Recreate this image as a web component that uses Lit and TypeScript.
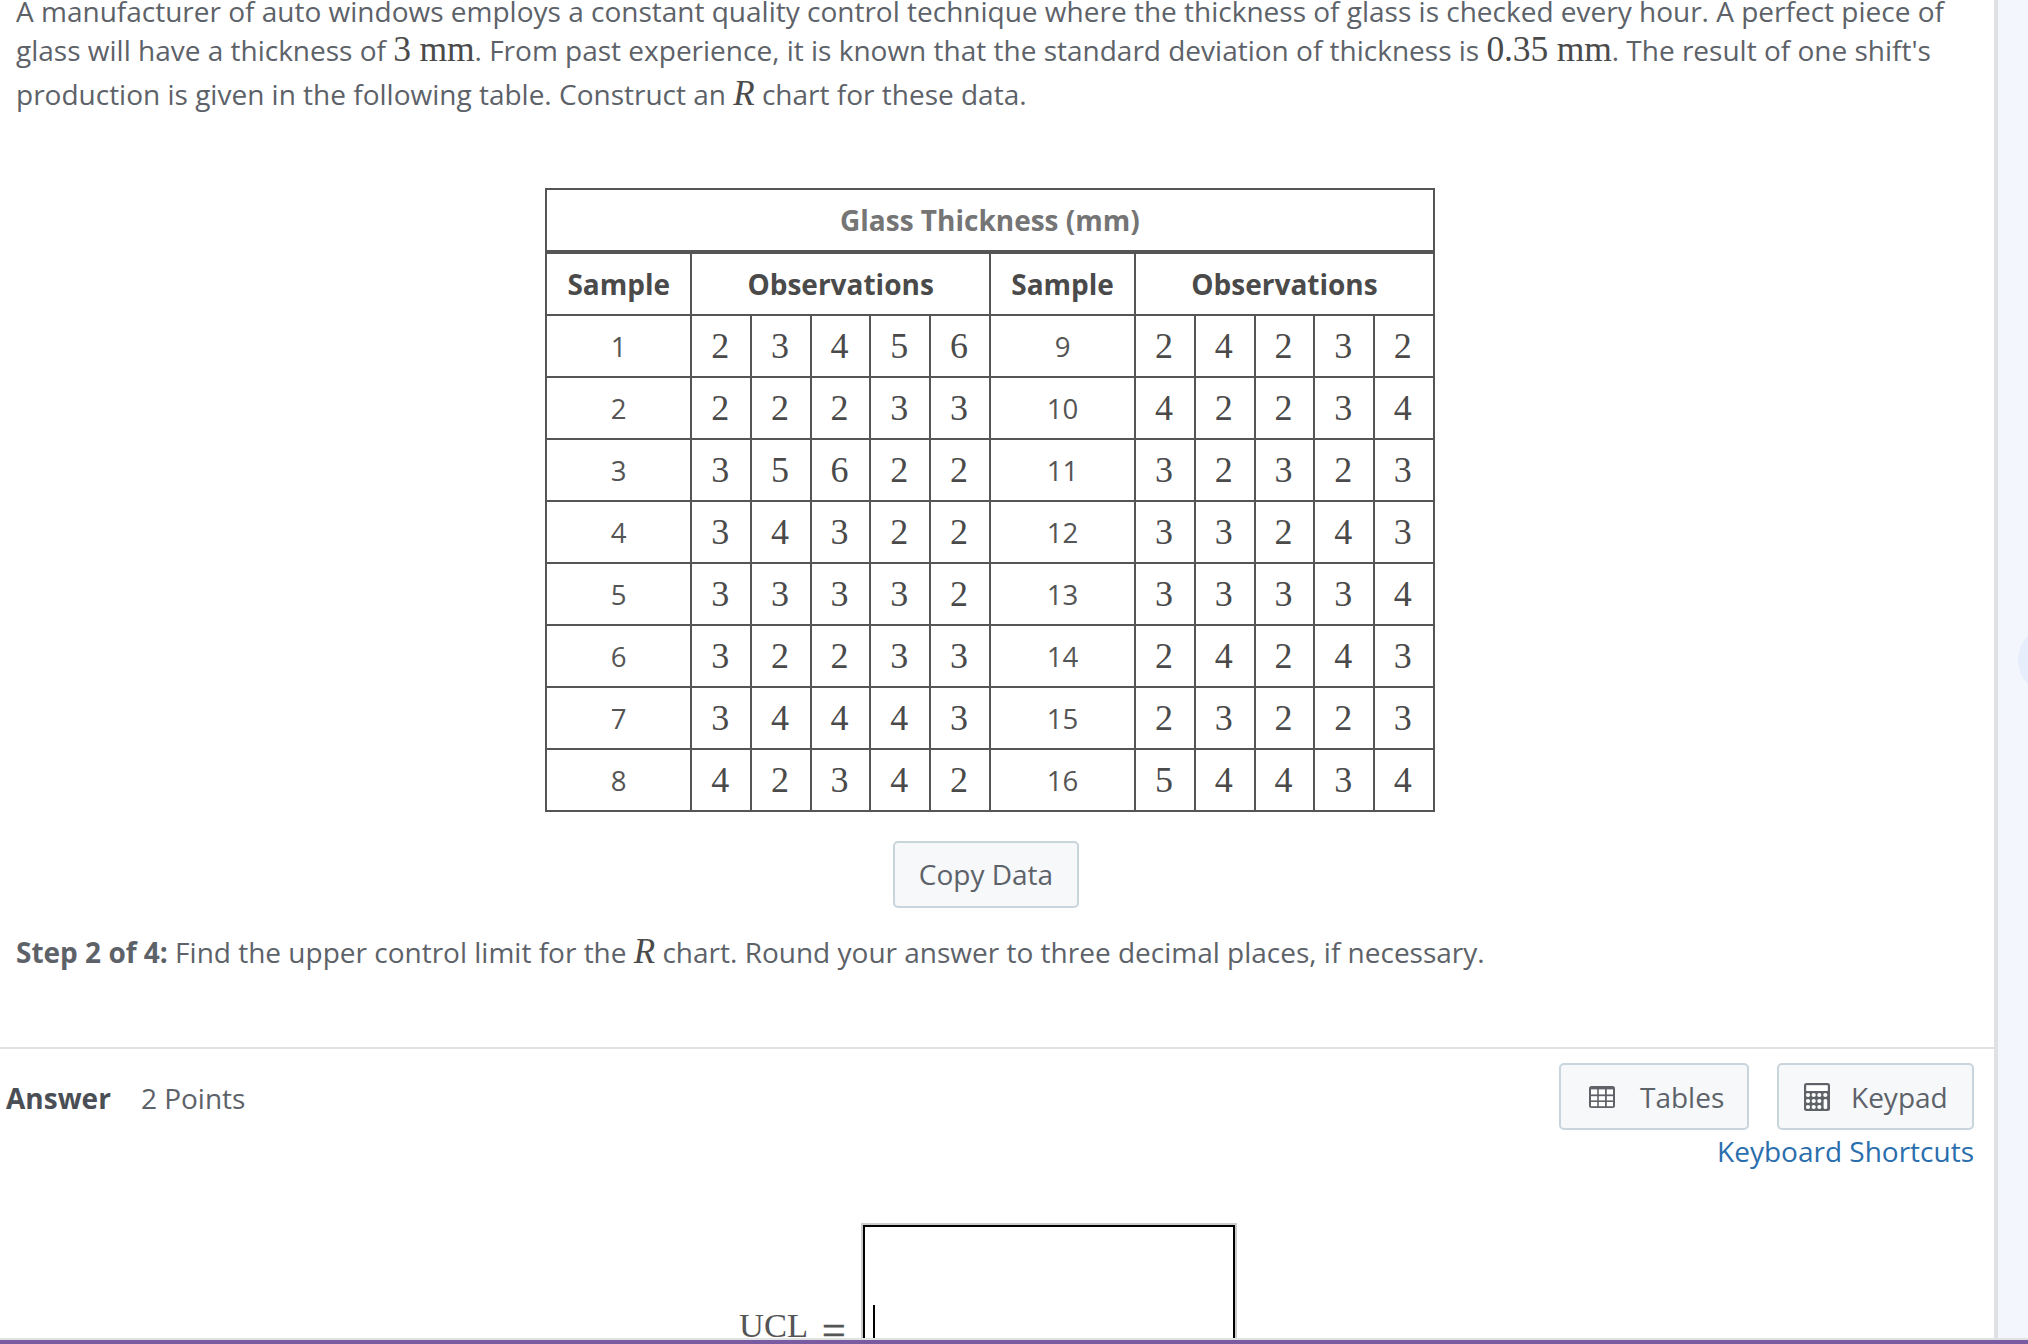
import { LitElement, html, css, svg } from "lit";
import { customElement } from "lit/decorators.js";

const ROWS: [number, number[], number, number[]][] = [
  [1, [2, 3, 4, 5, 6], 9, [2, 4, 2, 3, 2]],
  [2, [2, 2, 2, 3, 3], 10, [4, 2, 2, 3, 4]],
  [3, [3, 5, 6, 2, 2], 11, [3, 2, 3, 2, 3]],
  [4, [3, 4, 3, 2, 2], 12, [3, 3, 2, 4, 3]],
  [5, [3, 3, 3, 3, 2], 13, [3, 3, 3, 3, 4]],
  [6, [3, 2, 2, 3, 3], 14, [2, 4, 2, 4, 3]],
  [7, [3, 4, 4, 4, 3], 15, [2, 3, 2, 2, 3]],
  [8, [4, 2, 3, 4, 2], 16, [5, 4, 4, 3, 4]],
];

const tableIcon = () => {
  const xs = [2, 9.8, 17.8];
  const rows: [number, number][] = [[3.4, 5], [10.2, 4.2], [16, 4.2]];
  const cells = rows.flatMap(([y, h]) =>
    xs.map((x) => svg`<rect x=${x} y=${y} width="6.2" height=${h} fill="#fff"/>`));
  return html`<svg class="ico" width="26" height="22" viewBox="0 0 26 22"><rect width="26" height="22" rx="2.5" fill="#5f6368"/>${cells}</svg>`;
};

const calcIcon = () => {
  const keys = [];
  for (const y of [12, 18, 24]) for (const x of [4, 9.7, 15.3]) {
    keys.push(svg`<circle cx=${x} cy=${y} r="2.1" fill="#fff"/>`);
  }
  return html`<svg class="ico" width="26" height="28" viewBox="0 0 26 28"><rect width="26" height="28" rx="2.5" fill="#5f6368"/><rect x="2.2" y="2.2" width="21.6" height="5.8" fill="#fff"/>${keys}<circle cx="21.3" cy="12" r="2.1" fill="#fff"/><rect x="19.6" y="16" width="3.6" height="10" rx="1.6" fill="#fff"/></svg>`;
};

@customElement("app-root")
export class AppRoot extends LitElement {
  static styles = css`
    :host {
      display: flex;
      flex-direction: column;
      width: 2028px;
      height: 1344px;
      overflow: hidden;
      font-family: "Open Sans", "Noto Sans", sans-serif;
      color: #5d6269;
      background: #fff;
      position: relative;
    }
    .page { flex: 1; min-height: 0; display: flex; overflow: hidden; }
    .main {
      width: 1998px;
      flex: none;
      box-sizing: border-box;
      border-right: 4px solid #dfe1e3;
      background: #fff;
      overflow: hidden;
    }
    .aside { flex: 1; background: #f3f7fd; position: relative; overflow: hidden; }
    .blob {
      position: absolute;
      left: 20px;
      top: 625px;
      width: 70px;
      height: 70px;
      border-radius: 50%;
      background: #e6eefb;
    }
    .bar { flex: none; height: 6px; box-sizing: border-box; border-top: 2px solid #dfe1e3; background: #7a5aa0; }
    .intro {
      margin: -11px 0 0;
      padding: 0 16px;
      font-size: 28px;
      line-height: 44px;
      white-space: nowrap;
    }
    .l1 { display: block; height: 39px; }
    .m { font-family: "Liberation Serif", serif; font-size: 35.5px; color: #4a4a4a; line-height: 1; letter-spacing: -0.15px; }
    .mi { font-family: "Liberation Serif", serif; font-style: italic; font-size: 35px; color: #4a4a4a; line-height: 1; }
    table {
      border-collapse: collapse;
      table-layout: fixed;
      width: 889px;
      margin: 72px 0 0 545px;
      color: #4a4a4a;
    }
    td, th { border: 2px solid #555; padding: 0; text-align: center; height: 62px; box-sizing: border-box; }
    th { font-size: 28px; font-weight: 700; }
    .head { height: 63px; padding-bottom: 1px; }
    .title { color: #757575; border-bottom: 4px solid #555; height: 63px; }
    .s { font-size: 27.6px; font-weight: 400; color: #555; }
    .d { font-family: "Liberation Serif", serif; font-size: 36px; color: #4a4a4a; padding-right: 2px; }
    .cs { width: 145.4px; }
    .cd { width: 59.7px; }
    .copy-row { display: flex; justify-content: center; margin: 29px 0 0; padding-right: 22px; }
    .btn {
      box-sizing: border-box;
      height: 67px;
      border: 2px solid #c9d5dc;
      border-radius: 5px;
      background: #f6f8fa;
      display: inline-flex;
      align-items: center;
      font-size: 28px;
      color: #5d6269;
    }
    .copy { width: 186px; justify-content: center; padding-bottom: 1px; }
    .step { margin: 22px 0 0; padding: 0 16px; font-size: 28px; line-height: 44px; white-space: nowrap; }
    .step b { font-weight: 700; }
    .divider { height: 2px; background: #dfe1e3; margin-top: 73px; }
    .answer { display: flex; justify-content: space-between; padding: 14px 20px 0 6px; }
    .label { display: flex; gap: 30px; align-items: baseline; font-size: 28px; margin-top: 16px; }
    .label b { color: #4a4f55; font-weight: 700; }
    .tools { display: flex; flex-direction: column; align-items: flex-end; }
    .tool-row { display: flex; gap: 28px; }
    .tables { width: 190px; padding-left: 28px; gap: 25px; }
    .keypad { width: 197px; padding-left: 25px; gap: 21px; }
    .shortcuts { color: #2a6ead; font-size: 28px; line-height: 44px; margin-top: -1px; }
    .ico { flex: none; display: block; }
    .ucl { display: flex; align-items: flex-end; margin: 52px 0 0 739px; }
    .ucl-label { font-family: "Liberation Serif", serif; font-size: 34.5px; color: #555; line-height: 1; white-space: pre; margin-bottom: 3px; }
    .eq { display: inline-block; font-size: 42px; line-height: 34px; margin-left: 14px; transform: translateY(7px); -webkit-text-stroke: 0.6px #555; }
    .input {
      box-sizing: border-box;
      width: 372px;
      height: 120px;
      margin-left: 17px;
      border: 2px solid #000;
      outline: 2px solid #ccc;
      position: relative;
      background: #fff;
      flex: none;
    }
    .caret { position: absolute; left: 8px; top: 78px; width: 2px; height: 50px; background: #000; }
  `;

  render() {
    return html`
      <div class="page">
        <div class="main">
          <p class="intro"><span class="l1">A manufacturer of auto windows employs a constant quality control technique where the thickness of glass is checked every hour. A perfect piece of</span>glass will have a thickness of <span class="m">3 mm</span>. From past experience, it is known that the standard deviation of thickness is <span class="m">0.35 mm</span>. The result of one shift's<br />production is given in the following table. Construct an <span class="mi">R</span> chart for these data.</p>
          <table>
            <colgroup>
              <col class="cs" /><col class="cd" /><col class="cd" /><col class="cd" /><col class="cd" /><col class="cd" />
              <col class="cs" /><col class="cd" /><col class="cd" /><col class="cd" /><col class="cd" /><col class="cd" />
            </colgroup>
            <tr><th class="title" colspan="12">Glass Thickness (mm)</th></tr>
            <tr><th class="head">Sample</th><th class="head" colspan="5">Observations</th><th class="head">Sample</th><th class="head" colspan="5">Observations</th></tr>
            ${ROWS.map(([a, xs, b, ys]) => html`<tr>
              <td class="s">${a}</td>${xs.map((v) => html`<td class="d">${v}</td>`)}
              <td class="s">${b}</td>${ys.map((v) => html`<td class="d">${v}</td>`)}
            </tr>`)}
          </table>
          <div class="copy-row"><div class="btn copy">Copy Data</div></div>
          <p class="step"><b>Step 2 of 4:</b> Find the upper control limit for the <span class="mi">R</span> chart. Round your answer to three decimal places, if necessary.</p>
          <div class="divider"></div>
          <div class="answer">
            <div class="label"><b>Answer</b><span>2 Points</span></div>
            <div class="tools">
              <div class="tool-row">
                <div class="btn tables">${tableIcon()}<span>Tables</span></div>
                <div class="btn keypad">${calcIcon()}<span>Keypad</span></div>
              </div>
              <div class="shortcuts">Keyboard Shortcuts</div>
            </div>
          </div>
          <div class="ucl">
            <span class="ucl-label">UCL<span class="eq">=</span></span>
            <div class="input"><div class="caret"></div></div>
          </div>
        </div>
        <div class="aside"><div class="blob"></div></div>
      </div>
      <div class="bar"></div>
    `;
  }
}
